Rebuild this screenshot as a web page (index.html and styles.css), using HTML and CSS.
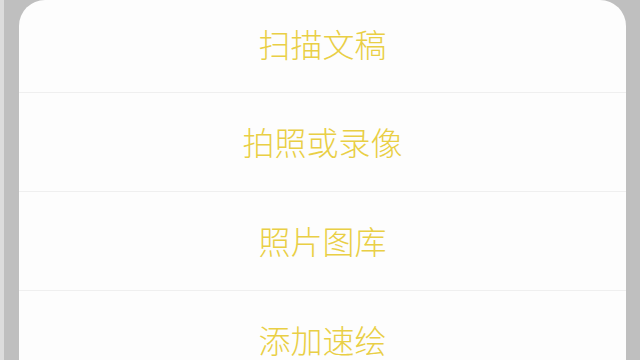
FILE: index.html
```html
<!DOCTYPE html>
<html lang="zh">
<head>
<meta charset="utf-8">
<link rel="stylesheet" href="styles.css">
</head>
<body>
<div class="screen">
  <div class="sheet">
    <div class="row first">扫描文稿</div>
    <div class="row">拍照或录像</div>
    <div class="row">照片图库</div>
    <div class="row">添加速绘</div>
  </div>
</div>
</body>
</html>
```
FILE: styles.css
```css
html, body {
  margin: 0;
  padding: 0;
  width: 640px;
  height: 360px;
  overflow: hidden;
  background: #dcdcdc;
}
.screen {
  height: 360px;
  margin: 0 0 0 4px;
  padding: 0 14px 0 15px;
  background: #bfbfbf;
  width: 607px;
  display: flex;
}
.sheet {
  flex: 1;
  background: #fdfdfd;
  border-radius: 26px 26px 0 0;
  display: flex;
  flex-direction: column;
}
.row {
  flex: none;
  height: 98px;
  padding-bottom: 2px;
  box-sizing: border-box;
  display: flex;
  align-items: center;
  justify-content: center;
  border-top: 1px solid #efefef;
  font-family: "Noto Sans CJK SC", sans-serif;
  font-weight: 300;
  font-size: 32px;
  color: #e9cf45;
}
.row:not(.first) {
  height: 99px;
}
.row.first {
  height: 92px;
  padding-bottom: 6px;
  border-top: none;
}
```
